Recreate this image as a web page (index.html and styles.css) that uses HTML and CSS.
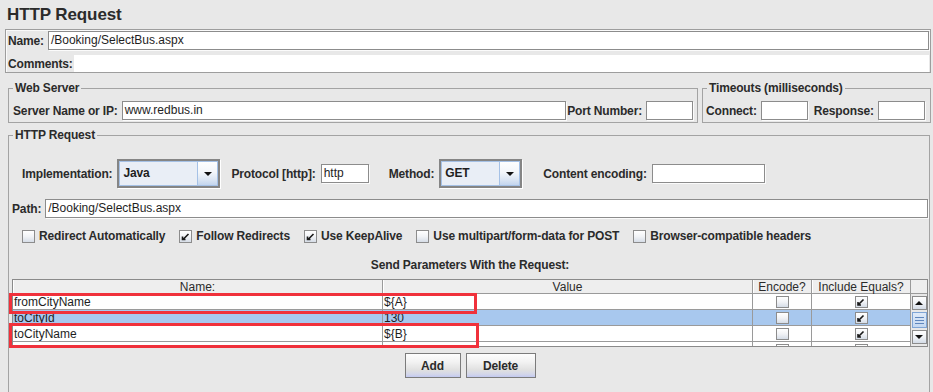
FILE: index.html
```html
<!DOCTYPE html>
<html>
<head>
<meta charset="utf-8">
<title>HTTP Request</title>
<link rel="stylesheet" href="styles.css">
</head>
<body>
<div class="title">HTTP Request</div>

<div class="name-panel">
  <div class="np-row"><span class="lbl">Name:</span><div class="field grow">/Booking/SelectBus.aspx</div></div>
  <div class="np-row2"><span class="lbl lbl-tight">Comments:</span><div class="white grow"></div></div>
</div>

<div class="server-row">
  <fieldset class="fs ws">
    <legend>Web Server</legend>
    <div class="fs-in">
      <span class="lbl">Server Name or IP:</span><div class="field grow">www.redbus.in</div>
      <span class="lbl port-lbl">Port Number:</span><div class="field w47"></div>
    </div>
  </fieldset>
  <fieldset class="fs to">
    <legend>Timeouts (milliseconds)</legend>
    <div class="fs-in fs-in-to">
      <span class="lbl">Connect:</span><div class="field w47"></div>
      <span class="lbl resp-lbl">Response:</span><div class="field w47"></div>
    </div>
  </fieldset>
</div>

<fieldset class="fs http">
  <legend>HTTP Request</legend>
  <div class="http-in">
    <div class="impl-row">
      <span class="lbl">Implementation:</span>
      <div class="combo c-impl">
        <div class="combo-val">Java</div>
        <div class="combo-btn"><svg width="8" height="4" viewBox="0 0 8 4"><path d="M0 0h8L4 4z" fill="#111"/></svg></div>
      </div>
      <span class="lbl">Protocol [http]:</span>
      <div class="field w48 proto">http</div>
      <span class="lbl">Method:</span>
      <div class="combo c-meth">
        <div class="combo-val">GET</div>
        <div class="combo-btn"><svg width="8" height="4" viewBox="0 0 8 4"><path d="M0 0h8L4 4z" fill="#111"/></svg></div>
      </div>
      <span class="lbl">Content encoding:</span>
      <div class="field w113"></div>
    </div>

    <div class="path-row"><span class="lbl">Path:</span><div class="field grow">/Booking/SelectBus.aspx</div></div>

    <div class="cb-row">
      <label class="cbl"><span class="cb"></span>Redirect Automatically</label>
      <label class="cbl"><span class="cb"><svg width="11" height="11" viewBox="0 0 11 11"><path d="M2.5 5.5v3h3M3 8.5l5.5-5.5" fill="none" stroke="#1a1a1a" stroke-width="1.6"/></svg></span>Follow Redirects</label>
      <label class="cbl"><span class="cb"><svg width="11" height="11" viewBox="0 0 11 11"><path d="M2.5 5.5v3h3M3 8.5l5.5-5.5" fill="none" stroke="#1a1a1a" stroke-width="1.6"/></svg></span>Use KeepAlive</label>
      <label class="cbl"><span class="cb"></span>Use multipart/form-data for POST</label>
      <label class="cbl"><span class="cb"></span>Browser-compatible headers</label>
    </div>

    <div class="params-title">Send Parameters With the Request:</div>

    <div class="tbl">
      <div class="grid">
        <div class="th">Name:</div><div class="th">Value</div><div class="th">Encode?</div><div class="th">Include Equals?</div>

        <div class="td">fromCityName</div><div class="td">${A}</div>
        <div class="td c"><span class="cb tcb"></span></div>
        <div class="td c"><span class="cb tcb"><svg width="10" height="10" viewBox="0 0 10 10"><path d="M2 5v3h3M2.5 7.5l5-5" fill="none" stroke="#1a1a1a" stroke-width="1.6"/></svg></span></div>

        <div class="td sel">toCityId</div><div class="td sel">130</div>
        <div class="td c sel"><span class="cb tcb"></span></div>
        <div class="td c sel"><span class="cb tcb"><svg width="10" height="10" viewBox="0 0 10 10"><path d="M2 5v3h3M2.5 7.5l5-5" fill="none" stroke="#1a1a1a" stroke-width="1.6"/></svg></span></div>

        <div class="td">toCityName</div><div class="td">${B}</div>
        <div class="td c"><span class="cb tcb"></span></div>
        <div class="td c"><span class="cb tcb"><svg width="10" height="10" viewBox="0 0 10 10"><path d="M2 5v3h3M2.5 7.5l5-5" fill="none" stroke="#1a1a1a" stroke-width="1.6"/></svg></span></div>

        <div class="td"></div><div class="td"></div>
        <div class="td c"><span class="cb tcb"></span></div>
        <div class="td c"><span class="cb tcb"></span></div>
      </div>
      <div class="sbar">
        <div class="sb-head"></div>
        <div class="sb-btn sb-up"><svg width="8" height="4" viewBox="0 0 8 4"><path d="M0 4h8L4 0z" fill="#111"/></svg></div>
        <div class="sb-thumb"><i></i><i></i><i></i></div>
        <div class="sb-btn sb-down"><svg width="8" height="4" viewBox="0 0 8 4"><path d="M0 0h8L4 4z" fill="#111"/></svg></div>
      </div>
      <div class="hl hl1"></div>
      <div class="hl hl2"></div>
    </div>

    <div class="btns">
      <button class="btn btn-add">Add</button>
      <button class="btn btn-del">Delete</button>
    </div>
  </div>
</fieldset>
</body>
</html>
```
FILE: styles.css
```css
* { box-sizing: border-box; }
html, body { margin: 0; height: 392px; overflow: hidden; }
body {
  background: #e8e8e8;
  font: bold 12px "Liberation Sans", Arial, sans-serif;
  letter-spacing: -0.15px;
  color: #2b2b2b;
}

.title {
  height: 29px;
  line-height: 29px;
  padding-left: 7px;
  font-size: 17px;
  letter-spacing: -0.1px;
  color: #2b2b2b;
}

.lbl { margin-right: 4px; white-space: nowrap; flex-shrink: 0; }
.lbl-tight { margin-right: 0; }
.grow { flex: 1; min-width: 0; }

.field {
  height: 19px;
  border: 1px solid #8c8c8c;
  box-shadow: 1px 1px 0 #fbfbfb;
  background: #fff;
  font-weight: normal;
  letter-spacing: 0;
  color: #1e1e1e;
  line-height: 17px;
  padding-left: 2px;
  white-space: nowrap;
  overflow: hidden;
  flex-shrink: 0;
}
.w47 { width: 47px; }
.w48 { width: 48px; }
.w113 { width: 113px; }
.white { height: 17px; background: #fff; margin-left: 1px; }

/* Name panel */
.name-panel {
  margin-left: 5px;
  width: 926px;
  border: 1px solid #9d9d9d;
  box-shadow: inset 1px 1px 0 #fafafa;
  padding: 1px 1px 0 2px;
}
.np-row { display: flex; align-items: center; height: 19px; }
.np-row2 { display: flex; align-items: center; height: 17px; margin-top: 5px; }

/* fieldsets */
.fs {
  margin: 0;
  padding: 0;
  border: 1px solid #a3a3a3;
  min-width: 0;
}
.fs legend {
  margin-left: 4px;
  padding: 0 2px;
  line-height: 14px;
  color: #2b2b2b;
}

.server-row { display: flex; align-items: flex-start; margin-top: 8px; }
.ws { margin-left: 8px; width: 690px; }
.to { margin-left: 4px; width: 229px; }
.fs-in { display: flex; align-items: center; padding: 6px 4px 2px 4px; }
.fs-in-to { padding-left: 3px; padding-right: 3px; }
.port-lbl { margin-left: 1px; }
.resp-lbl { margin-left: 6px; }

/* HTTP Request */
.http { margin: 5px 0 0 8px; width: 922px; }
.http-in { padding: 17px 1px 40px 3px; }

.impl-row { display: flex; align-items: center; height: 29px; margin-left: 10px; }
.impl-row .lbl { margin-right: 5px; }
.combo {
  display: flex;
  height: 29px;
  border: 2px solid #858585;
  box-shadow: 1px 1px 0 #fff;
  margin-right: 11px;
  flex-shrink: 0;
}
.c-impl { width: 103px; }
.c-meth { width: 83px; margin-right: 21px; }
.combo-val {
  flex: 1;
  border: 1px solid #a5c1e6;
  background: #e9eef6;
  padding-left: 3px;
  line-height: 23px;
  color: #1e1e1e;
}
.combo-btn {
  width: 20px;
  border: 1px solid #a5c1e6;
  border-left: 0;
  background: linear-gradient(#fefefe, #f3f6fa 45%, #dce6f3 75%, #c3d5ee);
  display: flex;
  align-items: center;
  justify-content: center;
}
.proto { margin-right: 20px; }

.path-row { display: flex; align-items: center; height: 19px; margin-top: 11px; }

.cb-row { display: flex; align-items: center; height: 14px; margin-top: 11px; margin-left: 10px; gap: 14px; }
.cbl { display: flex; align-items: center; gap: 4px; white-space: nowrap; }
.cb {
  display: inline-block;
  width: 13px;
  height: 13px;
  border: 1px solid #8c8c8c;
  background: linear-gradient(#ffffff, #f1f3f6 50%, #d6dde7);
  flex-shrink: 0;
}
.cb svg { display: block; }

.params-title { margin-top: 15px; line-height: 14px; text-align: center; }

/* table */
.tbl {
  position: relative;
  display: flex;
  width: 916px;
  height: 68px;
  margin-top: 7px;
  border: 1px solid #8a8a8a;
  background: #fff;
}
.grid {
  display: grid;
  grid-template-columns: 370px 370px 59px 99px;
  grid-template-rows: 14px;
  grid-auto-rows: 16px;
  width: 898px;
  height: 66px;
  overflow: hidden;
  font-weight: normal;
  letter-spacing: 0;
  color: #1e1e1e;
}
.th {
  background: #eeeeee;
  border-right: 1px solid #9a9a9a;
  border-bottom: 1px solid #9a9a9a;
  box-shadow: inset 1px 0 0 #fff;
  text-align: center;
  line-height: 12px;
  padding-top: 1px;
  color: #2b2b2b;
}
.td {
  border-right: 1px solid #9a9a9a;
  border-bottom: 1px solid #9a9a9a;
  padding: 1px 0 0 1px;
  line-height: 14px;
  background: #fff;
  white-space: nowrap;
  overflow: hidden;
}
.td.c { display: flex; justify-content: center; padding: 2px 0 0 0; }
.sel { background: #a8c8ee; }
.tcb { width: 13px; height: 12px; }

.sbar {
  width: 16px;
  height: 66px;
  background: #e8e8e8;
  overflow: hidden;
  display: flex;
  flex-direction: column;
  align-items: center;
}
.sb-head {
  width: 16px;
  height: 14px;
  flex-shrink: 0;
  background: #eee;
  border-bottom: 1px solid #9a9a9a;
}
.sb-btn {
  width: 15px;
  height: 14px;
  flex-shrink: 0;
  border: 1px solid #8c8c8c;
  background: linear-gradient(#fefefe, #eef1f5 55%, #d3dbe6);
  display: flex;
  align-items: center;
  justify-content: center;
}
.sb-up { margin-top: 2px; }
.sb-down { margin-top: 2px; }
.sb-thumb {
  width: 15px;
  height: 16px;
  flex-shrink: 0;
  margin-top: 2px;
  border: 1px solid #7fa5d6;
  background: linear-gradient(#dfeaf8, #c4d8f1);
  display: flex;
  flex-direction: column;
  align-items: center;
  justify-content: center;
  gap: 2px;
}
.sb-thumb i { display: block; width: 9px; height: 1px; background: #5f86bd; }

.hl {
  position: absolute;
  border: 3px solid #f0313b;
  pointer-events: none;
}
.hl1 { left: -4px; top: 13px; width: 468px; height: 21px; }
.hl2 { left: -4px; top: 43px; width: 470px; height: 25px; }

.btns { display: flex; justify-content: center; gap: 5px; margin-top: 6px; }
.btn {
  height: 25px;
  border: 1px solid #7b7b7b;
  background: linear-gradient(#fdfdfd, #f2f2f2 35%, #e0e0e0 70%, #d3d6ea 88%, #c2c9f0);
  font: bold 12px "Liberation Sans", Arial, sans-serif;
  letter-spacing: -0.15px;
  color: #2b2b2b;
  padding: 0;
}
.btn-add { width: 56px; }
.btn-del { width: 70px; }
```
